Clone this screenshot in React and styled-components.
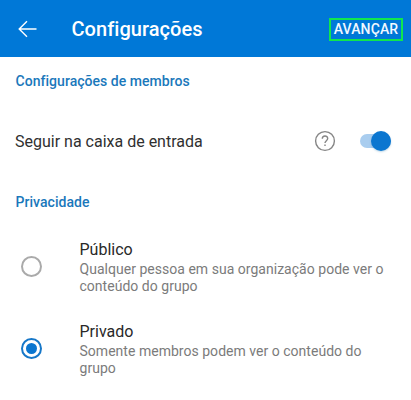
import React from "react";
import styled, { createGlobalStyle } from "styled-components";

const Global = createGlobalStyle`
  * { box-sizing: border-box; }
  body { margin: 0; background: #fff; font-family: Roboto, "Liberation Sans", sans-serif; overflow: hidden; }
`;
const Screen = styled.main`
  width: 411px;
  height: 400px;
  background: #fff;
`;
const Header = styled.header`
  display: flex;
  align-items: center;
  height: 57px;
  padding: 1px 8px 0 16px;
  background: #0078d7;
  color: #fff;
`;
const BackButton = styled.button`
  display: flex;
  width: 24px;
  height: 24px;
  padding: 0;
  border: 0;
  background: none;
  color: inherit;
`;
const Title = styled.h1`
  flex: 1;
  margin: 0 0 0 31.5px;
  font-size: 20px;
  font-weight: 500;
  line-height: 24px;
  letter-spacing: 0.05px;
`;
const NextButton = styled.button`
  width: 74px;
  height: 23px;
  padding: 0;
  border: 2px solid #10e64e;
  background: none;
  color: #f2f9ff;
  font: 500 14px/19px Roboto, sans-serif;
  letter-spacing: 0.1px;
  white-space: nowrap;
`;
const SectionTitle = styled.h2`
  margin: 0;
  padding: ${(p) => p.$top}px 15px 0 15.5px;
  color: #1a78bb;
  font-size: 14px;
  font-weight: 500;
  line-height: 18px;
  letter-spacing: 0.04px;
`;
const SettingRow = styled.div`
  display: flex;
  align-items: center;
  height: 24px;
  margin-top: 39px;
  padding: 0 20px 0 15px;
`;
const SettingLabel = styled.span`
  flex: 1;
  color: #303030;
  font-size: 16px;
`;
const Switch = styled.div`
  display: flex;
  align-items: center;
  justify-content: flex-end;
  width: 31px;
  height: 14px;
  margin-left: 24px;
  border-radius: 7px;
  background: #a9cdef;
`;
const Thumb = styled.span`
  flex: none;
  width: 20px;
  height: 20px;
  border-radius: 50%;
  background: #0b76d0;
  box-shadow: 0 1px 2px rgba(0, 100, 160, 0.25);
`;
const Option = styled.div`
  display: flex;
  align-items: center;
  height: 58px;
  margin-top: ${(p) => p.$top}px;
  padding-left: 21px;
`;
const Radio = styled.span`
  display: flex;
  align-items: center;
  justify-content: center;
  width: 21px;
  height: 21px;
  border: 2px solid ${(p) => (p.$checked ? "#1677c8" : "#aaa")};
  border-radius: 50%;
`;
const Dot = styled.span`
  width: 11px;
  height: 11px;
  border-radius: 50%;
  background: #0b76d0;
`;
const OptionText = styled.div`
  margin-left: 37.5px;
  padding-top: 2px;
`;
const OptionTitle = styled.div`
  color: #292929;
  font-size: 16px;
  line-height: 22px;
`;
const Description = styled.div`
  color: #7b7b7b;
  font-size: 14px;
  line-height: 17px;
  letter-spacing: 0.025px;
  white-space: nowrap;
`;

export default function App() {
  return (
    <Screen>
      <Global />
      <Header>
        <BackButton aria-label="Voltar">
          <svg width="24" height="24" viewBox="0 0 24 24" fill="none" stroke="currentColor" strokeWidth="1.4">
            <path d="M20.5 12H3.5M11 4.2L3.2 12L11 19.8" />
          </svg>
        </BackButton>
        <Title>Configurações</Title>
        <NextButton>AVANÇAR</NextButton>
      </Header>
      <SectionTitle $top={15}>Configurações de membros</SectionTitle>
      <SettingRow>
        <SettingLabel>Seguir na caixa de entrada</SettingLabel>
        <svg width="22" height="22" viewBox="0 0 22 22" fill="none" stroke="#858585" strokeWidth="1.4">
          <circle cx="11" cy="11" r="9.4" />
          <path d="M8.3 8.7C8.3 5.1 13.7 5.1 13.7 8.5C13.7 10.6 11 10.8 11 13M11 14.5V16" />
        </svg>
        <Switch><Thumb /></Switch>
      </SettingRow>
      <SectionTitle $top={40}>Privacidade</SectionTitle>
      <Option $top={26}>
        <Radio />
        <OptionText>
          <OptionTitle>Público</OptionTitle>
          <Description>Qualquer pessoa em sua organização pode ver o<br />conteúdo do grupo</Description>
        </OptionText>
      </Option>
      <Option $top={24}>
        <Radio $checked><Dot /></Radio>
        <OptionText>
          <OptionTitle>Privado</OptionTitle>
          <Description>Somente membros podem ver o conteúdo do<br />grupo</Description>
        </OptionText>
      </Option>
    </Screen>
  );
}
